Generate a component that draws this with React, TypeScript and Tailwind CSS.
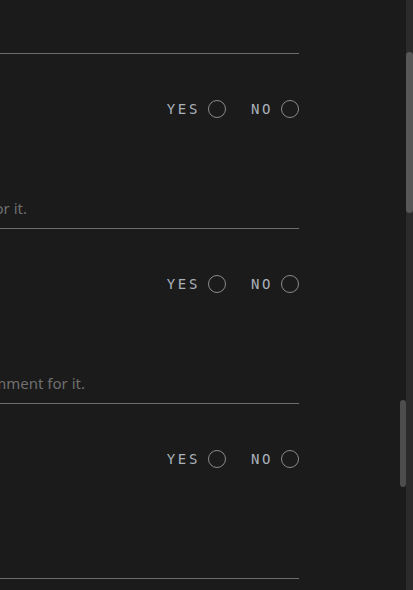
function Choice({ label }: { label: string }) {
  return (
    <div className="flex items-center gap-2">
      <span className="font-['DejaVu_Sans_Mono',monospace] text-[14px] leading-none tracking-[2.6px] text-[#aab1ba]">
        {label}
      </span>
      <span className="w-[18px] h-[18px] rounded-full border-[1.5px] border-[#8a8a8a]" />
    </div>
  )
}

function Section({ placeholder, endClass }: { placeholder: string; endClass: string }) {
  return (
    <div className="flex flex-col">
      <div className="h-[174px] flex flex-col pt-[46px]">
        <div className="h-[18px] flex items-center justify-end gap-[25px]">
          <Choice label="YES" />
          <Choice label="NO" />
        </div>
        <div className="mt-[80px] h-[20px] relative">
          <span
            className={`absolute top-0 whitespace-nowrap text-[15px] leading-[20px] text-[#6f6f6f] font-['Noto_Sans',sans-serif] ${endClass}`}
          >
            {placeholder}
          </span>
        </div>
      </div>
      <div className="h-px bg-[#6c6c6c]" />
    </div>
  )
}

export default function App() {
  return (
    <div className="relative w-[413px] h-[590px] overflow-hidden bg-[#1b1b1b]">
      <div className="w-[299px] flex flex-col pt-[53px]">
        <div className="h-px bg-[#6c6c6c]" />
        <Section placeholder="Please describe what you were looking for and leave a note for it." endClass="right-[272px]" />
        <Section placeholder="If not, tell us what went wrong and leave a comment for it." endClass="right-[214px]" />
        <Section placeholder="" endClass="right-0" />
      </div>

      {/* page scrollbar */}
      <div className="absolute top-0 right-0 w-[7px] h-full bg-[#2b2b2b]">
        <div className="mt-[52px] h-[161px] rounded-full bg-[#575757]" />
      </div>
      {/* inner scrollbar */}
      <div className="absolute left-[400px] top-[400px] w-[6px] h-[87px] rounded-full bg-[#4d4d4d]" />
    </div>
  )
}
